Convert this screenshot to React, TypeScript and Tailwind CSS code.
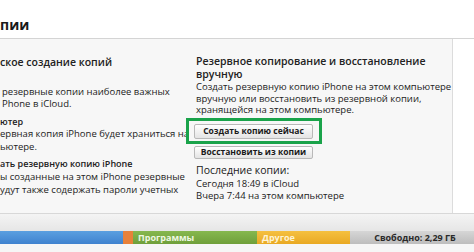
import type {FunctionComponent} from 'react'

const font = {fontFamily: '"Open Sans", "Noto Sans", sans-serif'}

const App: FunctionComponent = () => {
  return (
    <div className="relative h-[252px] w-[474px] overflow-hidden bg-white text-[#222]" style={font}>
      <header className="flex h-[39px] items-end border-b border-[#d4d4d4] pb-[4px]">
        <h1 className="text-[14px] font-bold leading-[18px] text-[#1a1a1a]">пии</h1>
      </header>

      <section className="flex h-[174px] w-[453px] overflow-hidden border-r border-[#dcdcdc] bg-[#f7f7f7]">
        {/* left column, cropped by the screenshot */}
        <div className="w-[186px] shrink-0 whitespace-nowrap pt-[17px] text-[9.5px] leading-[12.5px]">
          <p className="text-[10.5px] font-semibold">ское создание копий</p>
          <p className="mt-[17px] pl-[2px]">резервные копии наиболее важных</p>
          <p className="pl-[2px]">Phone в iCloud.</p>
          <p className="mt-[5px] text-[9px] font-semibold">ютер</p>
          <p>ервная копия iPhone будет храниться на</p>
          <p>ьютере.</p>
          <div className="mt-[4px] leading-[13px]">
            <p className="text-[9px] font-semibold">ать резервную копию iPhone</p>
            <p>ы созданные на этом iPhone резервные</p>
            <p>удут также содержать пароли учетных</p>
          </div>
        </div>

        {/* right column */}
        <div className="flex flex-col whitespace-nowrap pt-[16px]">
          <div className="pl-[10px] text-[10.5px] font-semibold leading-[13px]">
            <p>Резервное копирование и восстановление</p>
            <p>вручную</p>
          </div>
          <div className="pl-[10px] text-[9.5px] leading-[11.5px]">
            <p>Создать резервную копию iPhone на этом компьютере</p>
            <p>вручную или восстановить из резервной копии,</p>
            <p>хранящейся на этом компьютере.</p>
          </div>
          <div className="mt-[2px] flex h-[26px] w-[136px] items-start border-[3px] border-[#1aa34a] pl-[5px] pt-[3px]">
            <button className="flex h-[15px] w-[119px] items-center justify-center rounded-[2px] border border-[#b9b9b9] bg-gradient-to-b from-white to-[#e4e4e4] text-[8.5px] font-bold text-[#1a1a1a]">
              Создать копию сейчас
            </button>
          </div>
          <div className="mt-[2px] flex pl-[8px]">
            <button className="flex h-[13px] w-[119px] items-center justify-center rounded-[2px] border border-[#b9b9b9] bg-gradient-to-b from-white to-[#e4e4e4] text-[8.5px] font-bold text-[#1a1a1a]">
              Восстановить из копии
            </button>
          </div>
          <div className="mt-[4px] pl-[10px]">
            <p className="text-[10.5px] leading-[15px] text-[#1a1a1a]">Последние копии:</p>
            <p className="text-[9.5px] leading-[12px]">Сегодня 18:49 в iCloud</p>
            <p className="text-[9.5px] leading-[12px]">Вчера 7:44 на этом компьютере</p>
          </div>
        </div>
      </section>

      <div className="h-[18px] border-t border-[#d8d8d8] bg-gradient-to-b from-[#f4f4f4] to-[#e6e6e6]" />

      <div className="flex h-[13px] whitespace-nowrap text-[9px] font-bold leading-[13px]">
        <div className="w-[123px] bg-gradient-to-b from-[#5a9fe0] to-[#3f82cf]" />
        <div className="w-[10px] bg-[#e8813a]" />
        <div className="w-[124px] bg-gradient-to-b from-[#86b84e] to-[#6f9f3a] pl-[5px] text-[#eef8e2]">Программы</div>
        <div className="w-[93px] bg-gradient-to-b from-[#f5c040] to-[#e9a922] pl-[5px] text-[#fff3d2]">Другое</div>
        <div className="flex flex-1 justify-center bg-gradient-to-b from-[#d6d6d6] to-[#bdbdbd] pl-[6px] text-[#2a2a2a]">
          Свободно: 2,29 ГБ
        </div>
      </div>
      <div className="h-[8px] bg-[#f6f6f6]" />
    </div>
  )
}

export default App
